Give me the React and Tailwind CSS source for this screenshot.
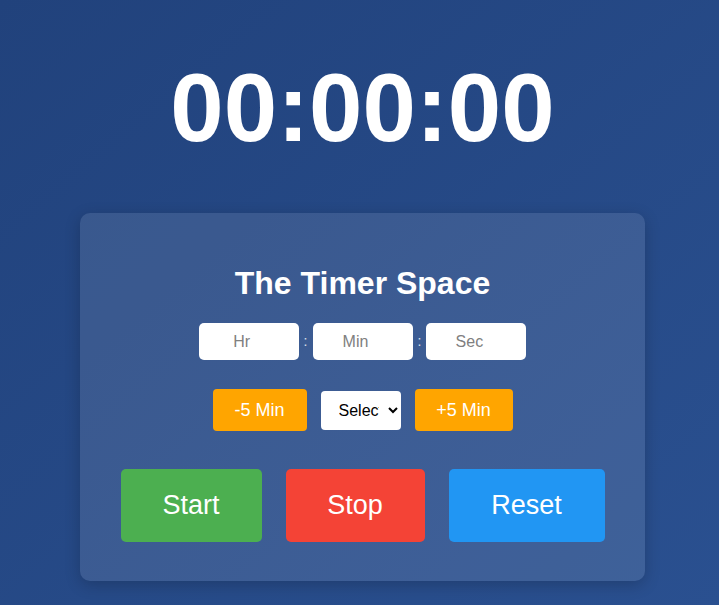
import React, { useState, useEffect, useRef } from 'react';

const pad = (n) => String(n).padStart(2, '0');

const App = () => {
    const [seconds, setSeconds] = useState(0);
    const [running, setRunning] = useState(false);
    const [hr, setHr] = useState('');
    const [min, setMin] = useState('');
    const [sec, setSec] = useState('');
    const tick = useRef(null);

    useEffect(() => {
        if (running) {
            tick.current = setInterval(() => {
                setSeconds((s) => (s > 0 ? s - 1 : 0));
            }, 1000);
        }
        return () => clearInterval(tick.current);
    }, [running]);

    const display = `${pad(Math.floor(seconds / 3600))}:${pad(Math.floor((seconds % 3600) / 60))}:${pad(seconds % 60)}`;

    const handleStart = () => {
        if (seconds === 0) {
            const total = (Number(hr) || 0) * 3600 + (Number(min) || 0) * 60 + (Number(sec) || 0);
            setSeconds(total);
        }
        setRunning(true);
    };

    const handleReset = () => {
        setRunning(false);
        setSeconds(0);
        setHr('');
        setMin('');
        setSec('');
    };

    const adjust = (delta) => setSeconds((s) => Math.max(0, s + delta));

    const inputClass = "w-[100px] h-[37px] rounded-[5px] bg-white pl-[2px] pr-[16px] text-center text-[16px] text-black placeholder:text-[#808080] outline-none";

    return (
        <div className="h-[605px] w-full bg-gradient-to-br from-[#21427c] to-[#2a5090] flex flex-col items-center pl-[6px] font-['Liberation_Sans',Arial,sans-serif] overflow-hidden">
            <h1 className="mt-[53px] text-[96px] leading-[110px] font-bold text-white">{display}</h1>

            <div className="mt-[50px] w-[565px] h-[368px] rounded-[10px] bg-white/10 shadow-[0_4px_16px_rgba(0,0,0,0.2)] flex flex-col items-center pt-[52px]">
                <h2 className="text-[32px] leading-[37px] font-bold text-white">The Timer Space</h2>

                <div className="mt-[21px] flex items-center gap-[5px] text-[14px] text-white/80">
                    <input className={inputClass} placeholder="Hr" value={hr} onChange={(e) => setHr(e.target.value)} />
                    <span>:</span>
                    <input className={inputClass} placeholder="Min" value={min} onChange={(e) => setMin(e.target.value)} />
                    <span>:</span>
                    <input className={inputClass} placeholder="Sec" value={sec} onChange={(e) => setSec(e.target.value)} />
                </div>

                <div className="mt-[29px] flex items-center gap-[14px]">
                    <button onClick={() => adjust(-300)} className="w-[94px] h-[42px] rounded-[4px] bg-[#ffa500] text-white text-[18px]">-5 Min</button>
                    <select className="w-[80px] h-[39px] rounded-[4px] bg-white text-black text-[16px] pl-[14px] pr-[6px]">
                        <option>Select</option>
                        <option>5 Min</option>
                        <option>10 Min</option>
                        <option>15 Min</option>
                    </select>
                    <button onClick={() => adjust(300)} className="w-[98px] h-[42px] rounded-[4px] bg-[#ffa500] text-white text-[18px]">+5 Min</button>
                </div>

                <div className="mt-[38px] flex items-center gap-[24px]">
                    <button onClick={handleStart} className="w-[141px] h-[73px] rounded-[5px] bg-[#4caf50] text-white text-[27px]">Start</button>
                    <button onClick={() => setRunning(false)} className="w-[139px] h-[73px] rounded-[5px] bg-[#f44336] text-white text-[27px]">Stop</button>
                    <button onClick={handleReset} className="w-[156px] h-[73px] rounded-[5px] bg-[#2196f3] text-white text-[27px]">Reset</button>
                </div>
            </div>
        </div>
    );
};

export default App;
